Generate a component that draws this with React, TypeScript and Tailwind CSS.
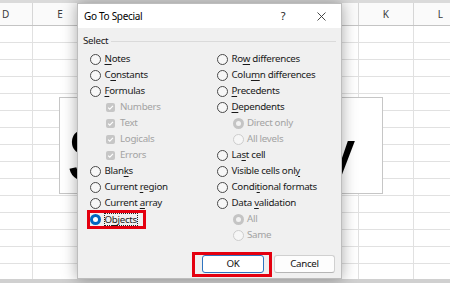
import type { ReactNode } from 'react'

type RadioState = 'off' | 'on' | 'disOn' | 'disOff'

interface Item {
  label: string
  accel?: number
  kind: 'radio' | 'check' | 'subRadio'
  state?: RadioState
  focus?: boolean
}

// F..J sit under the dialog, so their letters are left out
const COLS = ['D', 'E', '', '', '', '', '', 'K', 'L']
const ROWS = Array.from({ length: 16 }, (_, i) => i)

const LEFT: Item[] = [
  { label: 'Notes', accel: 0, kind: 'radio' },
  { label: 'Constants', accel: 1, kind: 'radio' },
  { label: 'Formulas', accel: 0, kind: 'radio' },
  { label: 'Numbers', kind: 'check' },
  { label: 'Text', kind: 'check' },
  { label: 'Logicals', kind: 'check' },
  { label: 'Errors', kind: 'check' },
  { label: 'Blanks', accel: 4, kind: 'radio' },
  { label: 'Current region', accel: 8, kind: 'radio' },
  { label: 'Current array', accel: 8, kind: 'radio' },
  { label: 'Objects', accel: 1, kind: 'radio', state: 'on', focus: true },
]

const RIGHT: Item[] = [
  { label: 'Row differences', accel: 2, kind: 'radio' },
  { label: 'Column differences', accel: 4, kind: 'radio' },
  { label: 'Precedents', accel: 0, kind: 'radio' },
  { label: 'Dependents', accel: 0, kind: 'radio' },
  { label: 'Direct only', kind: 'subRadio', state: 'disOn' },
  { label: 'All levels', kind: 'subRadio', state: 'disOff' },
  { label: 'Last cell', accel: 2, kind: 'radio' },
  { label: 'Visible cells only', accel: 17, kind: 'radio' },
  { label: 'Conditional formats', accel: 5, kind: 'radio' },
  { label: 'Data validation', accel: 5, kind: 'radio' },
  { label: 'All', kind: 'subRadio', state: 'disOn' },
  { label: 'Same', kind: 'subRadio', state: 'disOff' },
]

function Radio({ state = 'off' }: { state?: RadioState }) {
  if (state === 'on') {
    return (
      <span className="w-[11px] h-[11px] rounded-full bg-[#0067c0] flex items-center justify-center shrink-0">
        <span className="w-[5px] h-[5px] rounded-full bg-white" />
      </span>
    )
  }
  if (state === 'disOn') {
    return (
      <span className="w-[11px] h-[11px] rounded-full bg-[#c4c4c4] flex items-center justify-center shrink-0">
        <span className="w-[5px] h-[5px] rounded-full bg-[#f2f2f2]" />
      </span>
    )
  }
  if (state === 'disOff') {
    return <span className="w-[11px] h-[11px] rounded-full border border-[#cdcdcd] bg-[#f6f6f6] shrink-0" />
  }
  return <span className="w-[11px] h-[11px] rounded-full border border-[#4a4a4a] bg-[#f7f7f7] shrink-0" />
}

function Check() {
  return (
    <span className="w-[9px] h-[9px] rounded-[2px] bg-[#c6c6c6] flex items-center justify-center shrink-0">
      <svg width="7" height="7" viewBox="0 0 8 8">
        <path d="M1.3 4.1 L3.2 6 L6.8 2.1" stroke="white" strokeWidth="1.3" fill="none" />
      </svg>
    </span>
  )
}

function Label({ text, accel }: { text: string; accel?: number }) {
  if (accel == null) return <>{text}</>
  return (
    <>
      {text.slice(0, accel)}
      <span className="underline underline-offset-[1.5px]">{text[accel]}</span>
      {text.slice(accel + 1)}
    </>
  )
}

function Option({ item }: { item: Item }) {
  const disabled = item.kind !== 'radio'
  let mark: ReactNode
  let rowCls = 'h-[16px] flex items-center whitespace-nowrap'
  if (item.kind === 'check') {
    mark = <Check />
    rowCls += ' pl-[16.5px] gap-[5px]'
  } else if (item.kind === 'subRadio') {
    mark = <Radio state={item.state} />
    rowCls += ' pl-[16px] gap-[3.5px]'
  } else {
    mark = <Radio state={item.state} />
    rowCls += ' gap-[4px]'
  }
  return (
    <div className={rowCls}>
      {mark}
      <span
        className={`${disabled ? 'text-[#a3a3a3]' : 'text-[#1a1a1a]'} ${
          item.focus ? 'border border-dotted border-[#222] leading-[11px] -ml-[1px]' : ''
        }`}
      >
        <Label text={item.label} accel={item.accel} />
      </span>
    </div>
  )
}

function Sheet() {
  return (
    <div className="flex flex-col h-full">
      <div className="h-[3px] bg-[#dadada] shrink-0" />
      <div className="flex h-[23px] shrink-0 -ml-[21px] border-b border-[#c4c4c4] bg-[#fafafa]">
        {COLS.map((c, i) => (
          <div
            key={i}
            className="w-[54.33px] shrink-0 border-r border-[#d6d6d6] flex items-center justify-center text-[10px] text-[#3a3a3a]"
          >
            {c}
          </div>
        ))}
      </div>
      <div className="flex-1 overflow-hidden -ml-[21px]">
        {ROWS.map((r) => (
          <div key={r} className="flex h-[17px]">
            {COLS.map((_, i) => (
              <div key={i} className="w-[54.33px] shrink-0 border-r border-b border-[#e1e1e1]" />
            ))}
          </div>
        ))}
      </div>
      <div className="h-[4px] bg-[#d0d0d0] shrink-0" />
    </div>
  )
}

function ShapeBox() {
  return (
    <div className="absolute left-[59px] top-[97px] w-[324px] h-[97px] border border-[#c6c6c6] bg-white flex justify-between pt-[19px] pl-[6px] pr-[27px] font-['Liberation_Sans',sans-serif] text-[76px] leading-none text-black">
      <span>S</span>
      <span>y</span>
    </div>
  )
}

function Dialog() {
  return (
    <div className="absolute left-[77px] top-[3px] w-[265px] h-[276px] flex flex-col bg-[#f0f0f0] border border-[#bdbdbd] shadow-[0_0_14px_rgba(0,0,0,0.35)] text-[9.75px] tracking-[-0.3px] text-[#1a1a1a]">
      {/* Title bar */}
      <div className="h-[24px] shrink-0 bg-white flex items-center">
        <span className="flex-1 pl-[6px] text-[10px] text-black">Go To Special</span>
        <span className="w-[36px] text-center text-[11px] text-[#222]">?</span>
        <span className="w-[40px] flex items-center justify-center">
          <svg width="9" height="9" viewBox="0 0 9 9">
            <path d="M0.5 0.5 L8.5 8.5 M8.5 0.5 L0.5 8.5" stroke="#333" strokeWidth="0.9" />
          </svg>
        </span>
      </div>

      {/* Body */}
      <div className="flex-1 flex flex-col relative">
        <div className="flex items-center h-[16px] mt-[5px] pl-[5px] pr-[5px]">
          <span>Select</span>
          <span className="flex-1 h-px bg-[#dadada] ml-[3px]" />
        </div>

        <div className="grid grid-cols-[127px_1fr] pl-[11.5px] mt-[2px]">
          <div className="flex flex-col">
            {LEFT.map((it) => (
              <Option key={it.label} item={it} />
            ))}
          </div>
          <div className="flex flex-col">
            {RIGHT.map((it) => (
              <Option key={it.label} item={it} />
            ))}
          </div>
        </div>

        <div className="mt-auto flex justify-end gap-[10px] pr-[6px] pb-[5px]">
          <button className="w-[62px] h-[18px] rounded-[3px] bg-white border border-[#2f74c0] text-[#111]">
            OK
          </button>
          <button className="w-[61px] h-[18px] rounded-[3px] bg-[#fdfdfd] border border-[#d0d0d0] border-b-[#b5b5b5] text-[#111]">
            Cancel
          </button>
        </div>
      </div>

      {/* Red annotation boxes */}
      <span className="absolute left-[9px] top-[206px] w-[59px] h-[19px] border-[3px] border-[#e4000f]" />
      <span className="absolute left-[114px] top-[248px] w-[80px] h-[25px] border-[3px] border-[#e4000f]" />
    </div>
  )
}

export default function App() {
  return (
    <div className="relative w-[450px] h-[283px] overflow-hidden bg-white font-['Noto_Sans',sans-serif]">
      <Sheet />
      <ShapeBox />
      <Dialog />
    </div>
  )
}
